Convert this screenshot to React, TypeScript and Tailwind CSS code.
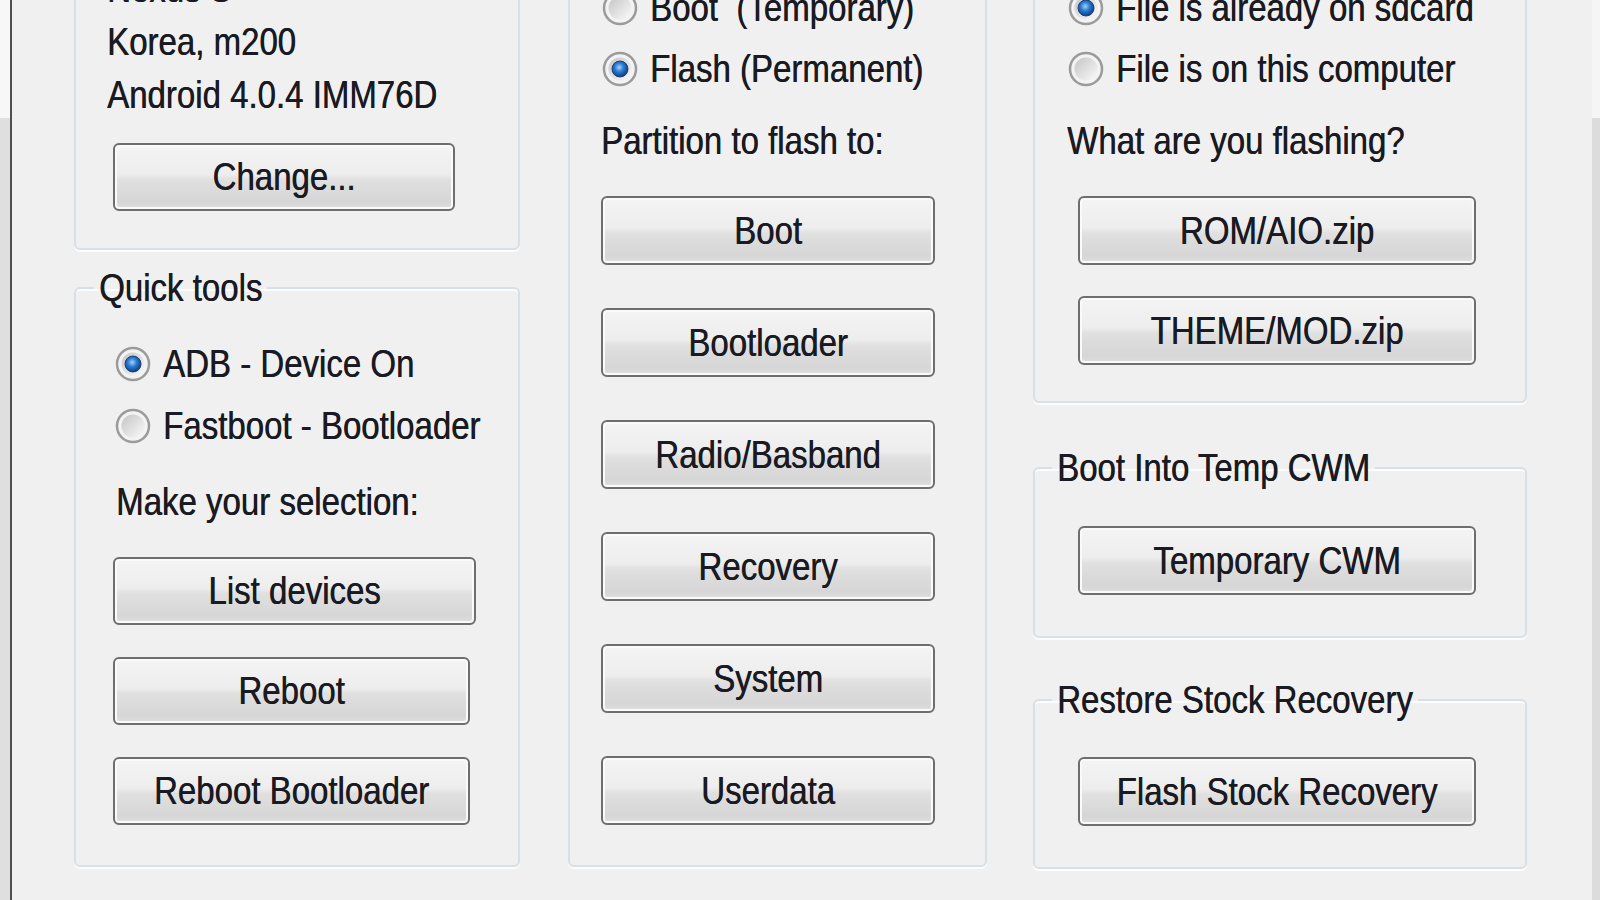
import { useId, type ReactNode } from 'react';

// Win7-style "flash tool" dialog, cropped and zoomed

function Txt({ children }: { children: ReactNode }) {
  return (
    <span className="inline-block scale-y-[1.15] whitespace-nowrap [text-shadow:0.4px_0_0_#1a1a22]">
      {children}
    </span>
  );
}

function Line({ children, className = '' }: { children: ReactNode; className?: string }) {
  return (
    <div className={`h-[53px] leading-[53px] ${className}`}>
      <Txt>{children}</Txt>
    </div>
  );
}

function RadioDot({ checked }: { checked: boolean }) {
  const id = useId().replace(/[^a-zA-Z0-9]/g, '');
  return (
    <svg width="36" height="36" viewBox="0 0 36 36" className="shrink-0">
      <defs>
        <linearGradient id={`${id}ring`} x1="0" y1="0" x2="1" y2="1">
          <stop offset="0" stopColor="#c4c4c4" />
          <stop offset="1" stopColor="#fafafa" />
        </linearGradient>
        <radialGradient id={`${id}dot`} cx="0.45" cy="0.4" r="0.62">
          <stop offset="0" stopColor="#9ad6ff" />
          <stop offset="0.45" stopColor="#2c7ad2" />
          <stop offset="1" stopColor="#0b3a7c" />
        </radialGradient>
      </defs>
      <circle cx="18" cy="18" r="16" fill="#f3f3f3" stroke="#9b9b9b" strokeWidth="2.5" />
      <circle cx="18" cy="18" r="11.5" fill={`url(#${id}ring)`} />
      {checked && (
        <circle cx="18" cy="18" r="8" fill={`url(#${id}dot)`} stroke="#1c3f73" strokeWidth="1" />
      )}
    </svg>
  );
}

function Radio({
  label,
  checked = false,
  pad,
  height,
}: {
  label: string;
  checked?: boolean;
  pad: string;
  height: string;
}) {
  return (
    <div className={`flex items-center gap-[12px] ${pad} ${height}`}>
      <RadioDot checked={checked} />
      <Txt>{label}</Txt>
    </div>
  );
}

function WinButton({ label, className = '' }: { label: string; className?: string }) {
  return (
    <button
      type="button"
      className={`flex items-center justify-center rounded-[6px] border-2 border-[#6e6e6e] bg-[linear-gradient(180deg,#f4f4f4_0%,#ededed_46%,#e0e0e0_54%,#d6d6d6_88%,#dedede_100%)] text-[33px] text-[#1a1a22] shadow-[inset_0_0_0_2px_#fafafa] ${className}`}
    >
      <Txt>{label}</Txt>
    </button>
  );
}

function GroupBox({
  title,
  children,
  className = '',
  legendPad = 'ml-[18px]',
}: {
  title?: string;
  children: ReactNode;
  className?: string;
  legendPad?: string;
}) {
  return (
    <fieldset
      className={`rounded-[6px] border-2 border-[#d8e0e5] shadow-[0_2px_0_0_#fcfcfc,inset_0_2px_0_0_#fcfcfc] ${className}`}
    >
      {title && (
        <legend className={`h-[40px] px-[5px] leading-[40px] ${legendPad}`}>
          <Txt>{title}</Txt>
        </legend>
      )}
      {children}
    </fieldset>
  );
}

export default function App() {
  const partitions = ['Bootloader', 'Radio/Basband', 'Recovery', 'System', 'Userdata'];

  return (
    <div className="flex h-[900px] w-[1600px] overflow-hidden bg-[#f0f0f0] font-['Liberation_Sans',Arial,sans-serif] text-[33px] text-[#1a1a22]">
      {/* window behind, left */}
      <div className="flex w-[10px] flex-col">
        <div className="h-[118px] bg-[#f7f7f7]" />
        <div className="flex-1 bg-[#dfdfdf]" />
      </div>
      <div className="w-[2px] bg-[#4f4f4f]" />

      <div className="flex flex-1 items-start pl-[62px]">
        {/* Column 1 */}
        <div className="flex w-[446px] flex-col">
          <GroupBox className="-mt-[80px] pt-[40px] pb-[37px]">
            <div className="pl-[31px]">
              <Line>Nexus S</Line>
              <Line>Korea, m200</Line>
              <Line>Android 4.0.4 IMM76D</Line>
            </div>
            <div className="pl-[37px]">
              <WinButton label="Change..." className="mt-[22px] h-[68px] w-[342px]" />
            </div>
          </GroupBox>

          <GroupBox title="Quick tools" className="mt-[18px] pt-[25px] pb-[40px]">
            <Radio label="ADB - Device On" checked pad="pl-[39px]" height="h-[62px]" />
            <Radio label="Fastboot - Bootloader" pad="pl-[39px]" height="h-[62px]" />
            <Line className="mt-[18px] pl-[40px]">Make your selection:</Line>
            <div className="flex flex-col pl-[37px]">
              <WinButton label="List devices" className="mt-[29px] h-[68px] w-[363px]" />
              <WinButton label="Reboot" className="mt-[32px] h-[68px] w-[357px]" />
              <WinButton label="Reboot Bootloader" className="mt-[32px] h-[68px] w-[357px]" />
            </div>
          </GroupBox>
        </div>

        {/* Column 2 */}
        <div className="ml-[48px] flex w-[419px] flex-col">
          <GroupBox className="-mt-[80px] pt-[55px] pb-[40px]">
            <Radio label={'Boot\u00a0 (Temporary)'} pad="pl-[32px]" height="h-[61px]" />
            <Radio label="Flash (Permanent)" checked pad="pl-[32px]" height="h-[61px]" />
            <Line className="mt-[15px] pl-[31px]">Partition to flash to:</Line>
            <div className="flex flex-col pl-[31px]">
              <WinButton label="Boot" className="mt-[29px] h-[69px] w-[334px]" />
              {partitions.map((p) => (
                <WinButton key={p} label={p} className="mt-[43px] h-[69px] w-[334px]" />
              ))}
            </div>
          </GroupBox>
        </div>

        {/* Column 3 */}
        <div className="ml-[46px] flex w-[494px] flex-col">
          <GroupBox className="-mt-[80px] pt-[55px] pb-[36px]">
            <Radio label="File is already on sdcard" checked pad="pl-[33px]" height="h-[61px]" />
            <Radio label="File is on this computer" pad="pl-[33px]" height="h-[61px]" />
            <Line className="mt-[15px] pl-[32px]">What are you flashing?</Line>
            <div className="flex flex-col pl-[43px]">
              <WinButton label="ROM/AIO.zip" className="mt-[29px] h-[69px] w-[398px]" />
              <WinButton label="THEME/MOD.zip" className="mt-[31px] h-[69px] w-[398px]" />
            </div>
          </GroupBox>

          <GroupBox title="Boot Into Temp CWM" legendPad="ml-[17px]" className="mt-[45px] pb-[41px]">
            <div className="pl-[43px]">
              <WinButton label="Temporary CWM" className="mt-[38px] h-[69px] w-[398px]" />
            </div>
          </GroupBox>

          <GroupBox title="Restore Stock Recovery" legendPad="ml-[17px]" className="mt-[42px] pb-[41px]">
            <div className="pl-[43px]">
              <WinButton label="Flash Stock Recovery" className="mt-[37px] h-[69px] w-[398px]" />
            </div>
          </GroupBox>
        </div>
      </div>

      {/* window behind, right */}
      <div className="flex w-[8px] flex-col">
        <div className="h-[118px] bg-[#f5f5f5]" />
        <div className="flex-1 bg-[#dcdcdc]" />
      </div>
    </div>
  );
}
